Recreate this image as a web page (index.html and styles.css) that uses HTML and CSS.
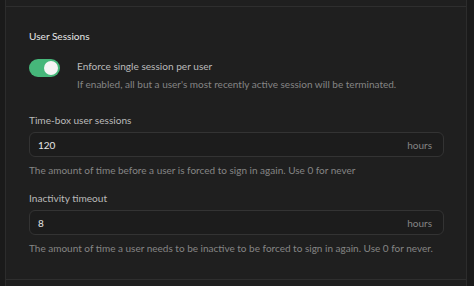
FILE: index.html
```html
<!DOCTYPE html>
<html>
<head>
<meta charset="utf-8">
<link rel="stylesheet" href="styles.css">
</head>
<body>
<div class="card">
  <section class="section">
    <h2 class="title">User Sessions</h2>
    <div class="toggle-row">
      <span class="switch"><span class="thumb"></span></span>
      <div class="toggle-text">
        <div class="toggle-label">Enforce single session per user</div>
        <div class="help">If enabled, all but a user's most recently active session will be terminated.</div>
      </div>
    </div>
    <div class="field">
      <label class="label">Time-box user sessions</label>
      <div class="input"><span class="value">120</span><span class="unit">hours</span></div>
      <div class="help">The amount of time before a user is forced to sign in again. Use 0 for never</div>
    </div>
    <div class="field">
      <label class="label">Inactivity timeout</label>
      <div class="input"><span class="value">8</span><span class="unit">hours</span></div>
      <div class="help">The amount of time a user needs to be inactive to be forced to sign in again. Use 0 for never.</div>
    </div>
  </section>
</div>
</body>
</html>
```
FILE: styles.css
```css
html, body {
  margin: 0;
  padding: 0;
  background: #1a1a1a;
  width: 474px;
  height: 286px;
  overflow: hidden;
  font-family: Lato, Inter, "Liberation Sans", sans-serif;
}
.card {
  margin: 0 7px 0 5px;
  height: 286px;
  box-sizing: border-box;
  background: #1f1f1f;
  border-left: 1px solid #2c2c2c;
  border-right: 1px solid #2c2c2c;
  padding-top: 6px;
}
.section {
  border-top: 1px solid #2e2e2e;
  border-bottom: 1px solid #2e2e2e;
  padding: 21px 22px 20px 23px;
  height: 274px;
  box-sizing: border-box;
}
.title {
  margin: 0;
  font-size: 10.1px;
  font-weight: 400;
  color: #e6e6e6;
  line-height: 16px;
}
.toggle-row {
  display: flex;
  gap: 17px;
  margin-top: 15px;
}
.switch {
  width: 31px;
  height: 18px;
  border-radius: 9px;
  background: #46b77a;
  position: relative;
  flex: none;
}
.thumb {
  position: absolute;
  right: 2px;
  top: 2px;
  width: 14px;
  height: 14px;
  border-radius: 50%;
  background: #f4f4f4;
}
.toggle-label {
  font-size: 10.1px;
  color: #bababa;
  line-height: 14px;
}
.help {
  font-size: 10px;
  color: #858585;
  line-height: 15px;
  margin-top: 4px;
  white-space: nowrap;
}
.field {
  margin-top: 21px;
}
.field + .field {
  margin-top: 13px;
}
.label {
  display: block;
  font-size: 10.1px;
  color: #bababa;
  line-height: 15px;
}
.input {
  margin-top: 4px;
  height: 25px;
  box-sizing: border-box;
  border: 1px solid #333;
  border-radius: 6px;
  background: #1c1c1c;
  display: flex;
  align-items: center;
  justify-content: space-between;
  padding: 0 11px 0 8px;
  font-size: 10px;
}
.value { color: #e6e6e6; }
.unit { color: #858585; }
.input + .help { margin-top: 6px; }
```
